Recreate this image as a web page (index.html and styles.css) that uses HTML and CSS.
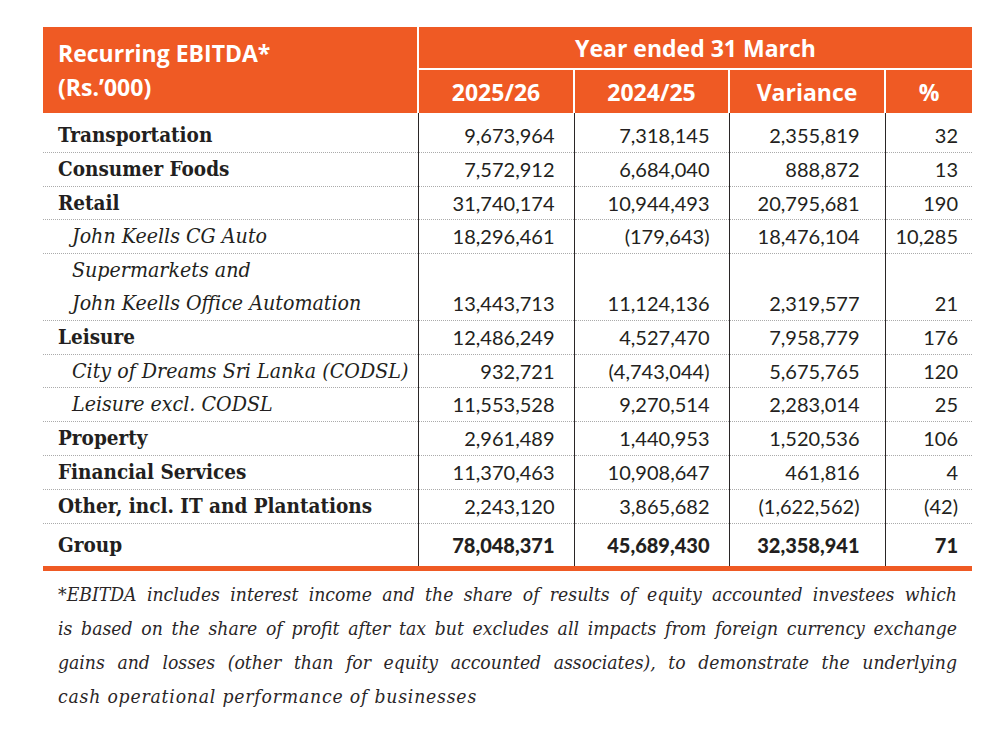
FILE: index.html
```html
<!DOCTYPE html>
<html lang="en">
<head>
  <meta charset="UTF-8" />
  <title>Recurring EBITDA</title>
  <link rel="stylesheet" href="styles.css">
</head>
<body>
  <div class="sheet">
    <table class="ebitda">
      <colgroup>
        <col class="c-label">
        <col class="c-num">
        <col class="c-mid">
        <col class="c-num">
        <col class="c-pct">
      </colgroup>
      <thead>
        <tr class="head-top">
          <th class="head-label" rowspan="2">Recurring EBITDA*<br>(Rs.’000)</th>
          <th class="head-span" colspan="4">Year ended 31 March</th>
        </tr>
        <tr class="head-cols">
          <th>2025/26</th>
          <th>2024/25</th>
          <th>Variance</th>
          <th>%</th>
        </tr>
      </thead>
      <tbody>
        <tr class="first">
          <td class="cat">Transportation</td>
          <td>9,673,964</td><td>7,318,145</td><td class="var">2,355,819</td><td>32</td>
        </tr>
        <tr>
          <td class="cat">Consumer Foods</td>
          <td>7,572,912</td><td>6,684,040</td><td class="var">888,872</td><td>13</td>
        </tr>
        <tr>
          <td class="cat">Retail</td>
          <td>31,740,174</td><td>10,944,493</td><td class="var">20,795,681</td><td>190</td>
        </tr>
        <tr>
          <td class="sub">John Keells CG Auto</td>
          <td>18,296,461</td><td>(179,643)</td><td class="var">18,476,104</td><td>10,285</td>
        </tr>
        <tr class="tall">
          <td class="sub">Supermarkets and<br>John Keells Office Automation</td>
          <td>13,443,713</td><td>11,124,136</td><td class="var">2,319,577</td><td>21</td>
        </tr>
        <tr>
          <td class="cat">Leisure</td>
          <td>12,486,249</td><td>4,527,470</td><td class="var">7,958,779</td><td>176</td>
        </tr>
        <tr>
          <td class="sub">City of Dreams Sri Lanka (CODSL)</td>
          <td>932,721</td><td>(4,743,044)</td><td class="var">5,675,765</td><td>120</td>
        </tr>
        <tr>
          <td class="sub">Leisure excl. CODSL</td>
          <td>11,553,528</td><td>9,270,514</td><td class="var">2,283,014</td><td>25</td>
        </tr>
        <tr>
          <td class="cat">Property</td>
          <td>2,961,489</td><td>1,440,953</td><td class="var">1,520,536</td><td>106</td>
        </tr>
        <tr>
          <td class="cat">Financial Services</td>
          <td>11,370,463</td><td>10,908,647</td><td class="var">461,816</td><td>4</td>
        </tr>
        <tr>
          <td class="cat">Other, incl. IT and Plantations</td>
          <td>2,243,120</td><td>3,865,682</td><td class="var">(1,622,562)</td><td>(42)</td>
        </tr>
        <tr class="total">
          <td class="cat">Group</td>
          <td>78,048,371</td><td>45,689,430</td><td class="var">32,358,941</td><td>71</td>
        </tr>
      </tbody>
    </table>
    <p class="note">
      <span class="line">*EBITDA includes interest income and the share of results of equity accounted investees which</span>
      <span class="line">is based on the share of profit after tax but excludes all impacts from foreign currency exchange</span>
      <span class="line">gains and losses (other than for equity accounted associates), to demonstrate the underlying</span>
      <span class="line last">cash operational performance of businesses</span>
    </p>
  </div>
</body>
</html>
```

FILE: styles.css
```css
body {
  margin: 0;
  background: #ffffff;
  color: #231f20;
}
.sheet {
  width: 929px;
  padding: 27px 0 0 43px;
}
.ebitda {
  width: 929px;
  border-collapse: collapse;
  table-layout: fixed;
}
.c-label { width: 375px; }
.c-num { width: 156px; }
.c-mid { width: 155px; }
.c-pct { width: 87px; }

/* header */
.ebitda th {
  background: #ef5a24;
  color: #fff;
  font-family: "Open Sans", sans-serif;
  font-weight: 700;
  font-size: 23px;
  line-height: 30px;
  padding: 0;
  text-align: center;
  border: 2px solid #fff;
  border-top: 0;
}
.head-top th { height: 41px; }
.head-cols th { height: 43px; border-bottom: 0; }
.ebitda th:last-child { border-right: 0; }
.ebitda th.head-label {
  text-align: left;
  vertical-align: top;
  padding: 9px 0 0 15px;
  line-height: 34px;
  border-left: 0;
  border-bottom: 0;
}
.ebitda th.head-span { border-right: 0; }

/* body */
.ebitda td {
  font-family: Lato, sans-serif;
  font-size: 20px;
  line-height: 32.8px;
  padding: 0 19px 0 0;
  text-align: right;
  border-left: 1.5px solid #2a2627;
  border-bottom: 1px dotted #ababab;
}
.ebitda td:first-child { border-left: 0; }
.ebitda td.var { padding-right: 25px; }
.ebitda td:last-child { padding-right: 14px; }
.ebitda td.cat,
.ebitda td.sub {
  text-align: left;
  font-family: "DejaVu Serif", serif;
  font-stretch: condensed;
  padding-right: 4px;
}
.ebitda td.cat {
  font-weight: 700;
  font-size: 20.5px;
  padding-left: 15px;
}
.ebitda td.sub {
  font-style: italic;
  font-size: 21.2px;
  padding-left: 29px;
}
.ebitda tr.first td { padding-top: 6px; }
.ebitda tr.tall td { vertical-align: bottom; }
.ebitda tr.total td {
  line-height: 34px;
  padding-top: 4px;
  padding-bottom: 4px;
  font-weight: 900;
  border-bottom: 5px solid #ef5a24;
}
.ebitda tr.total td.cat { font-weight: 700; }

/* footnote */
.note {
  margin: 7px 0 0;
  padding: 0 15px;
  font-family: "DejaVu Serif", serif;
  font-stretch: condensed;
  font-style: italic;
  font-size: 19.2px;
  line-height: 34px;
  color: #2a2627;
}
.note .line {
  display: block;
  white-space: nowrap;
  text-align: justify;
  text-align-last: justify;
}
.note .line.last {
  text-align-last: left;
  letter-spacing: 0.8px;
}
```
